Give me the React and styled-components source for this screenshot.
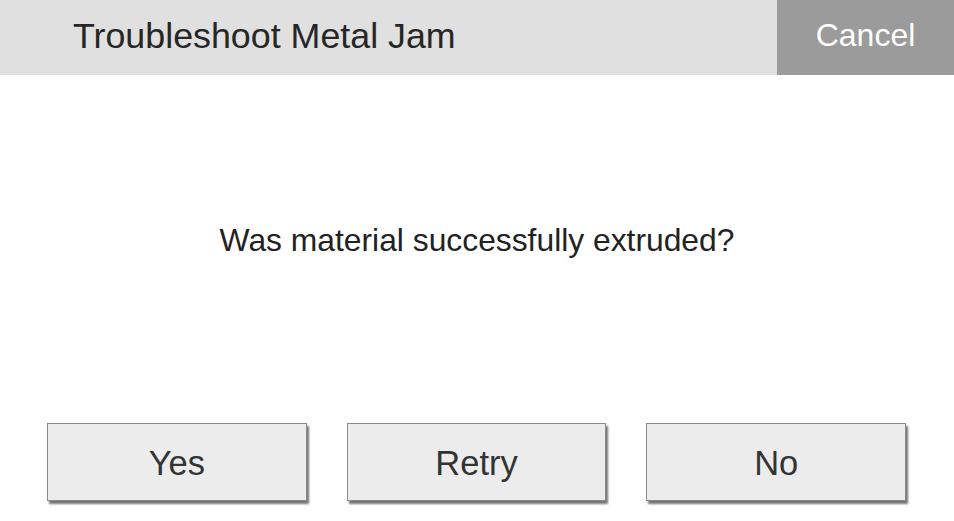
import React from "react";
import styled, { createGlobalStyle } from "styled-components";

const GlobalStyle = createGlobalStyle`
  html, body {
    margin: 0;
    padding: 0;
    background: #ffffff;
    font-family: "Liberation Sans", Arial, sans-serif;
  }
`;

const Screen = styled.div`
  width: 954px;
  height: 521px;
  display: flex;
  flex-direction: column;
  background: #ffffff;
  overflow: hidden;
`;

const Header = styled.div`
  height: 75px;
  display: flex;
  align-items: stretch;
  background: #e0e0e0;
`;

const Title = styled.h1`
  flex: 1;
  margin: 0;
  padding: 0 0 3px 73px;
  display: flex;
  align-items: center;
  font-size: 35.8px;
  font-weight: normal;
  color: #262626;
`;

const CancelButton = styled.button`
  width: 177px;
  border: none;
  background: #9b9b9b;
  color: #ffffff;
  font-family: inherit;
  font-size: 32px;
  padding: 0 0 4px 0;
`;

const Body = styled.div`
  flex: 1;
  display: flex;
  flex-direction: column;
`;

const Message = styled.p`
  flex: 1;
  margin: 0;
  display: flex;
  align-items: center;
  justify-content: center;
  padding-bottom: 18px;
  font-size: 31.8px;
  color: #222222;
`;

const ButtonRow = styled.div`
  display: flex;
  gap: 40px;
  padding: 0 48px 20px 47px;
`;

const ChoiceButton = styled.button`
  width: 260px;
  height: 78px;
  box-sizing: border-box;
  border: 1px solid #8a8a8a;
  background: #ececec;
  box-shadow: 2px 3px 2px rgba(0, 0, 0, 0.55);
  font-family: inherit;
  font-size: 34.5px;
  color: #333333;
  padding: 3px 0 0 0;
`;

export default function App() {
  return (
    <>
      <GlobalStyle />
      <Screen>
        <Header>
          <Title>Troubleshoot Metal Jam</Title>
          <CancelButton>Cancel</CancelButton>
        </Header>
        <Body>
          <Message>Was material successfully extruded?</Message>
          <ButtonRow>
            <ChoiceButton>Yes</ChoiceButton>
            <ChoiceButton>Retry</ChoiceButton>
            <ChoiceButton>No</ChoiceButton>
          </ButtonRow>
        </Body>
      </Screen>
    </>
  );
}
